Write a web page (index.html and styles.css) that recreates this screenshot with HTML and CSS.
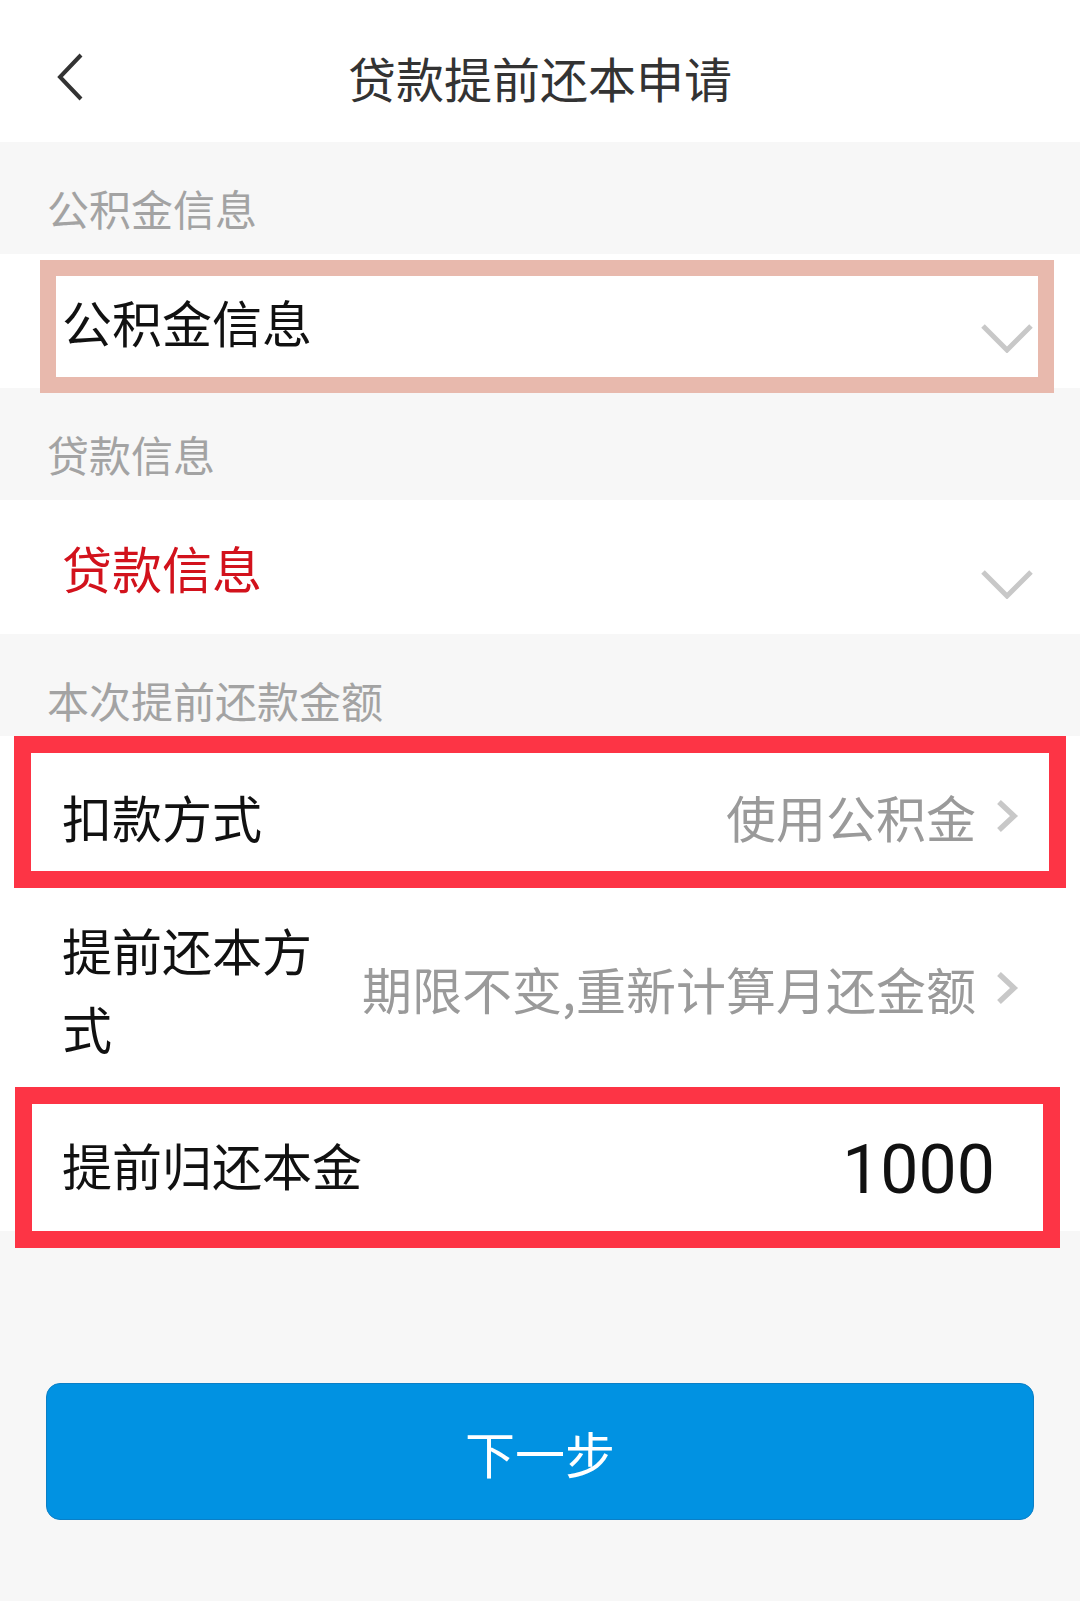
FILE: index.html
```html
<!DOCTYPE html>
<html lang="zh-CN">
<head>
    <meta charset="UTF-8">
    <meta name="viewport" content="width=device-width, initial-scale=1.0">
    <title>贷款提前还本申请</title>
    <link rel="stylesheet" href="styles.css">
</head>
<body>
    <div class="header">
        <button class="back-button" onclick="history.back()">
            <svg width="28" height="48" viewBox="0 0 28 48"><polyline points="25,2 4,24 25,46" fill="none" stroke="#333" stroke-width="4"/></svg>
        </button>
        <h1>贷款提前还本申请</h1>
    </div>

    <!-- 公积金信息 -->
    <div class="group-title">公积金信息</div>
    <div class="row row-select mark-soft">
        <span class="row-text">公积金信息</span>
        <svg class="arrow-down" width="52" height="30" viewBox="0 0 52 30"><polyline points="2,3 26,27 50,3" fill="none" stroke="#c8c8c8" stroke-width="5"/></svg>
    </div>

    <!-- 贷款信息 -->
    <div class="group-title">贷款信息</div>
    <div class="row row-select">
        <span class="row-text red">贷款信息</span>
        <svg class="arrow-down" width="52" height="30" viewBox="0 0 52 30"><polyline points="2,3 26,27 50,3" fill="none" stroke="#c8c8c8" stroke-width="5"/></svg>
    </div>

    <!-- 本次提前还款金额 -->
    <div class="group-title short">本次提前还款金额</div>
    <div class="row row-pay mark-red">
        <span class="row-text">扣款方式</span>
        <span class="row-value">使用公积金
            <svg class="arrow-right" width="22" height="32" viewBox="0 0 22 32"><polyline points="3,2 18,16 3,30" fill="none" stroke="#c8c8c8" stroke-width="5.5"/></svg>
        </span>
    </div>
    <div class="row row-mode">
        <span class="row-text narrow">提前还本方式</span>
        <span class="row-value">期限不变,重新计算月还金额
            <svg class="arrow-right" width="22" height="32" viewBox="0 0 22 32"><polyline points="3,2 18,16 3,30" fill="none" stroke="#c8c8c8" stroke-width="5.5"/></svg>
        </span>
    </div>
    <div class="row row-amount mark-red-low">
        <span class="row-text">提前归还本金</span>
        <span class="amount">1000</span>
    </div>

    <div class="footer">
        <button class="next-button">下一步</button>
    </div>
</body>
</html>
```

FILE: styles.css
```css
body {
    margin: 0;
    background: #f7f7f7;
    font-family: "Noto Sans CJK SC", "Noto Sans", sans-serif;
    color: #111;
}

.header {
    height: 142px;
    background: #fff;
    display: flex;
    align-items: center;
    justify-content: center;
    position: relative;
    padding-top: 12px;
    box-sizing: border-box;
}

.header h1 {
    margin: 0;
    font-size: 48px;
    font-weight: normal;
    color: #333;
    line-height: 60px;
}

.back-button {
    position: absolute;
    left: 56px;
    top: 53px;
    padding: 0;
    border: none;
    background: none;
    line-height: 0;
}

.group-title {
    height: 112px;
    box-sizing: border-box;
    padding: 36px 0 0 47px;
    font-size: 42px;
    line-height: 60px;
    color: #a3a3a3;
}

.group-title.short {
    height: 102px;
}

.row {
    background: #fff;
    display: flex;
    align-items: center;
    justify-content: space-between;
    padding: 0 62px;
    position: relative;
    box-sizing: border-box;
}

.row-text {
    font-size: 50px;
    line-height: 78px;
}

.row-text.red {
    color: #d2121c;
}

.row-text.narrow {
    width: 260px;
}

.row-value {
    display: flex;
    align-items: center;
    gap: 20px;
    font-size: 50px;
    color: #9a9a9a;
}

.row-select {
    height: 134px;
}

.arrow-down {
    align-self: flex-end;
    margin: 0 -15px 35px 0;
}

.row-pay {
    height: 152px;
    padding-top: 8px;
}

.row-mode {
    height: 199px;
}

.row-amount {
    height: 144px;
    padding-top: 10px;
    padding-right: 85px;
}

.amount {
    font-family: Roboto, "Noto Sans", sans-serif;
    font-size: 68px;
    line-height: 80px;
    margin-top: 12px;
    color: #111;
}

/* annotation frames drawn over the rows */
.mark-soft::after,
.mark-red::after,
.mark-red-low::after {
    content: "";
    position: absolute;
    pointer-events: none;
}

.mark-soft::after {
    top: 6px;
    bottom: -5px;
    left: 40px;
    right: 26px;
    border: 16px solid #e8b9ad;
}

.mark-red::after {
    top: 0;
    bottom: 0;
    left: 14px;
    right: 14px;
    border: 17px solid #fd3445;
}

.mark-red-low::after {
    top: 0;
    bottom: -17px;
    left: 15px;
    right: 20px;
    border: 17px solid #fd3445;
}

.footer {
    padding: 152px 46px 0;
}

.next-button {
    width: 100%;
    height: 137px;
    border: 1px solid #0b7fc6;
    border-radius: 14px;
    background: #0192e2;
    color: #fff;
    font-family: "Noto Sans CJK SC", sans-serif;
    font-size: 50px;
    cursor: pointer;
}
```
